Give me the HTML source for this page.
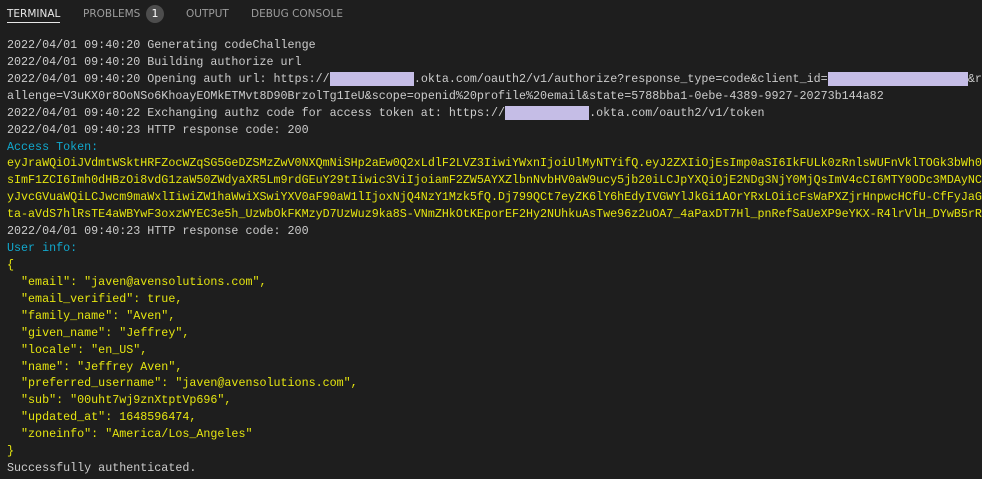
<!DOCTYPE html>
<html><head><meta charset="utf-8"><style>
html,body{margin:0;padding:0;background:#1e1e1e;width:982px;height:479px;overflow:hidden}
.tabs{position:absolute;top:0;left:0;width:982px;height:30px;font-family:"DejaVu Sans","Liberation Sans",sans-serif;font-size:10.5px;color:#9d9d9d}
.tabs span{position:absolute;top:8px;letter-spacing:0}
.t1{left:7px;color:#e7e7e7}
.ul{position:absolute;left:7px;top:22px;width:53px;height:1px;background:#e7e7e7}
.badge{position:absolute;left:146px;top:5px;width:18px;height:18px;border-radius:9px;background:#4d4d4d;color:#fff;text-align:center;line-height:18px;font-size:11px}
pre{position:absolute;left:7px;top:37px;margin:0;font-family:"Liberation Mono",monospace;font-size:11.7px;line-height:16.92px;color:#cccccc;white-space:pre;width:975px;overflow:hidden}
.c{color:#11a8cd}.y{color:#e5e510}
.r{background:#c5bde6;color:#c5bde6}
</style></head><body>
<div class="tabs"><span class="t1">TERMINAL</span><div class="ul"></div><span style="left:83px">PROBLEMS</span><div class="badge">1</div><span style="left:186px">OUTPUT</span><span style="left:251px">DEBUG CONSOLE</span></div>
<pre>2022/04/01 09:40:20 Generating codeChallenge
2022/04/01 09:40:20 Building authorize url
2022/04/01 09:40:20 Opening auth url: https://<span class="r">            </span>.okta.com/oauth2/v1/authorize?response_type=code&amp;client_id=<span class="r">                    </span>&amp;re
allenge=V3uKX0r8OoNSo6KhoayEOMkETMvt8D90BrzolTg1IeU&amp;scope=openid%20profile%20email&amp;state=5788bba1-0ebe-4389-9927-20273b144a82
2022/04/01 09:40:22 Exchanging authz code for access token at: https://<span class="r">            </span>.okta.com/oauth2/v1/token
2022/04/01 09:40:23 HTTP response code: 200
<span class="c">Access Token:</span>
<span class="y">eyJraWQiOiJVdmtWSktHRFZocWZqSG5GeDZSMzZwV0NXQmNiSHp2aEw0Q2xLdlF2LVZ3IiwiYWxnIjoiUlMyNTYifQ.eyJ2ZXIiOjEsImp0aSI6IkFULk0zRnlsWUFnVklTOGk3bWh0d
sImF1ZCI6Imh0dHBzOi8vdG1zaW50ZWdyaXR5Lm9rdGEuY29tIiwic3ViIjoiamF2ZW5AYXZlbnNvbHV0aW9ucy5jb20iLCJpYXQiOjE2NDg3NjY0MjQsImV4cCI6MTY0ODc3MDAyNCw
yJvcGVuaWQiLCJwcm9maWxlIiwiZW1haWwiXSwiYXV0aF90aW1lIjoxNjQ4NzY1Mzk5fQ.Dj799QCt7eyZK6lY6hEdyIVGWYlJkGi1AOrYRxLOiicFsWaPXZjrHnpwcHCfU-CfFyJaGH
ta-aVdS7hlRsTE4aWBYwF3oxzWYEC3e5h_UzWbOkFKMzyD7UzWuz9ka8S-VNmZHkOtKEporEF2Hy2NUhkuAsTwe96z2uOA7_4aPaxDT7Hl_pnRefSaUeXP9eYKX-R4lrVlH_DYwB5rRK</span>
2022/04/01 09:40:23 HTTP response code: 200
<span class="c">User info:</span>
<span class="y">{
  "email": "javen@avensolutions.com",
  "email_verified": true,
  "family_name": "Aven",
  "given_name": "Jeffrey",
  "locale": "en_US",
  "name": "Jeffrey Aven",
  "preferred_username": "javen@avensolutions.com",
  "sub": "00uht7wj9znXtptVp696",
  "updated_at": 1648596474,
  "zoneinfo": "America/Los_Angeles"
}</span>
Successfully authenticated.</pre>
</body></html>
